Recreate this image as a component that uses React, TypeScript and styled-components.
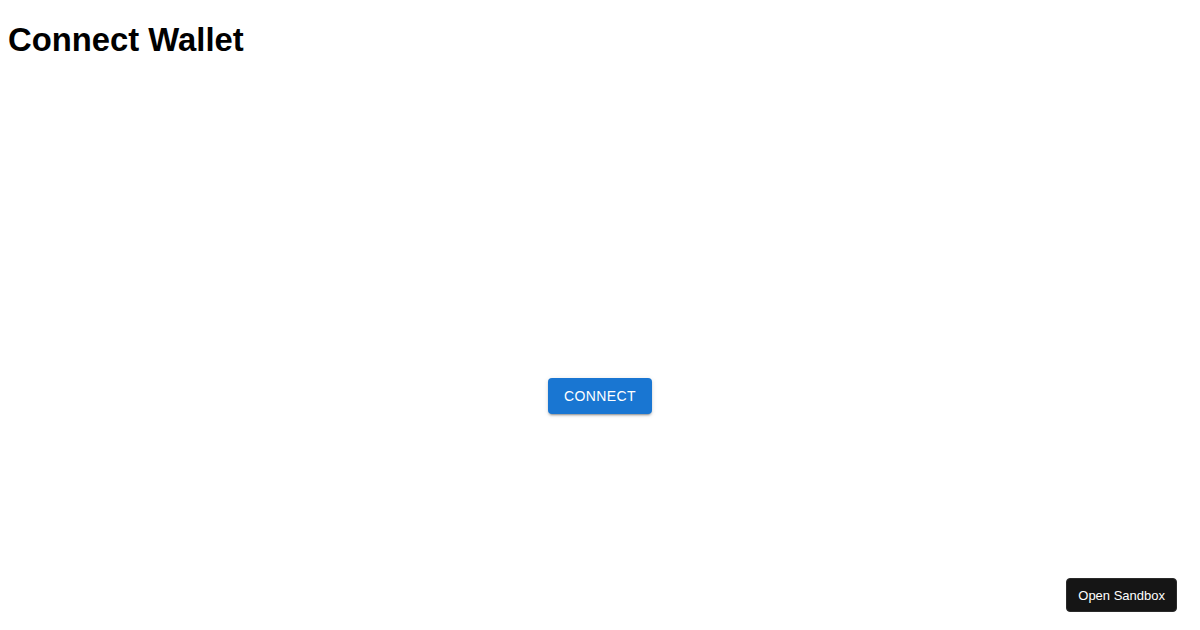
import { FC } from "react";
import styled, { createGlobalStyle } from "styled-components";

const GlobalStyle = createGlobalStyle`
  body {
    margin: 8px;
    background: #ffffff;
    font-family: "Liberation Sans", Arial, sans-serif;
  }
`;

const App: FC = () => {
  return (
    <>
      <GlobalStyle />
      <Title>Connect Wallet</Title>
      <Stage>
        <ConnectButton type="button">Connect</ConnectButton>
      </Stage>
      <SandboxButton type="button">Open Sandbox</SandboxButton>
    </>
  );
};

export default App;

const Title = styled.h1`
  margin: 12.5px 0 22.44px;
  font-family: "Liberation Sans", Arial, sans-serif;
  font-size: 32.8px;
  font-weight: 700;
  color: #000;
`;

const Stage = styled.div`
  height: 100vh;
  display: flex;
  align-items: center;
  justify-content: center;
`;

const ConnectButton = styled.button`
  border: 0;
  border-radius: 4px;
  padding: 6px 16px;
  min-width: 64px;
  background: #1976d2;
  color: #fff;
  font-family: "Liberation Sans", Arial, sans-serif;
  font-size: 14px;
  font-weight: 400;
  line-height: 1.75;
  letter-spacing: 0.02857em;
  text-transform: uppercase;
  cursor: pointer;
  box-shadow: 0 3px 1px -2px rgba(0, 0, 0, 0.2), 0 2px 2px 0 rgba(0, 0, 0, 0.14),
    0 1px 5px 0 rgba(0, 0, 0, 0.12);
`;

const SandboxButton = styled.button`
  position: fixed;
  right: 23px;
  bottom: 18px;
  height: 34px;
  padding: 0 11px;
  border: 1px solid #2a2a2a;
  border-radius: 4px;
  background: #151515;
  color: #fff;
  font-family: "Liberation Sans", Arial, sans-serif;
  font-size: 13px;
  cursor: pointer;
`;
